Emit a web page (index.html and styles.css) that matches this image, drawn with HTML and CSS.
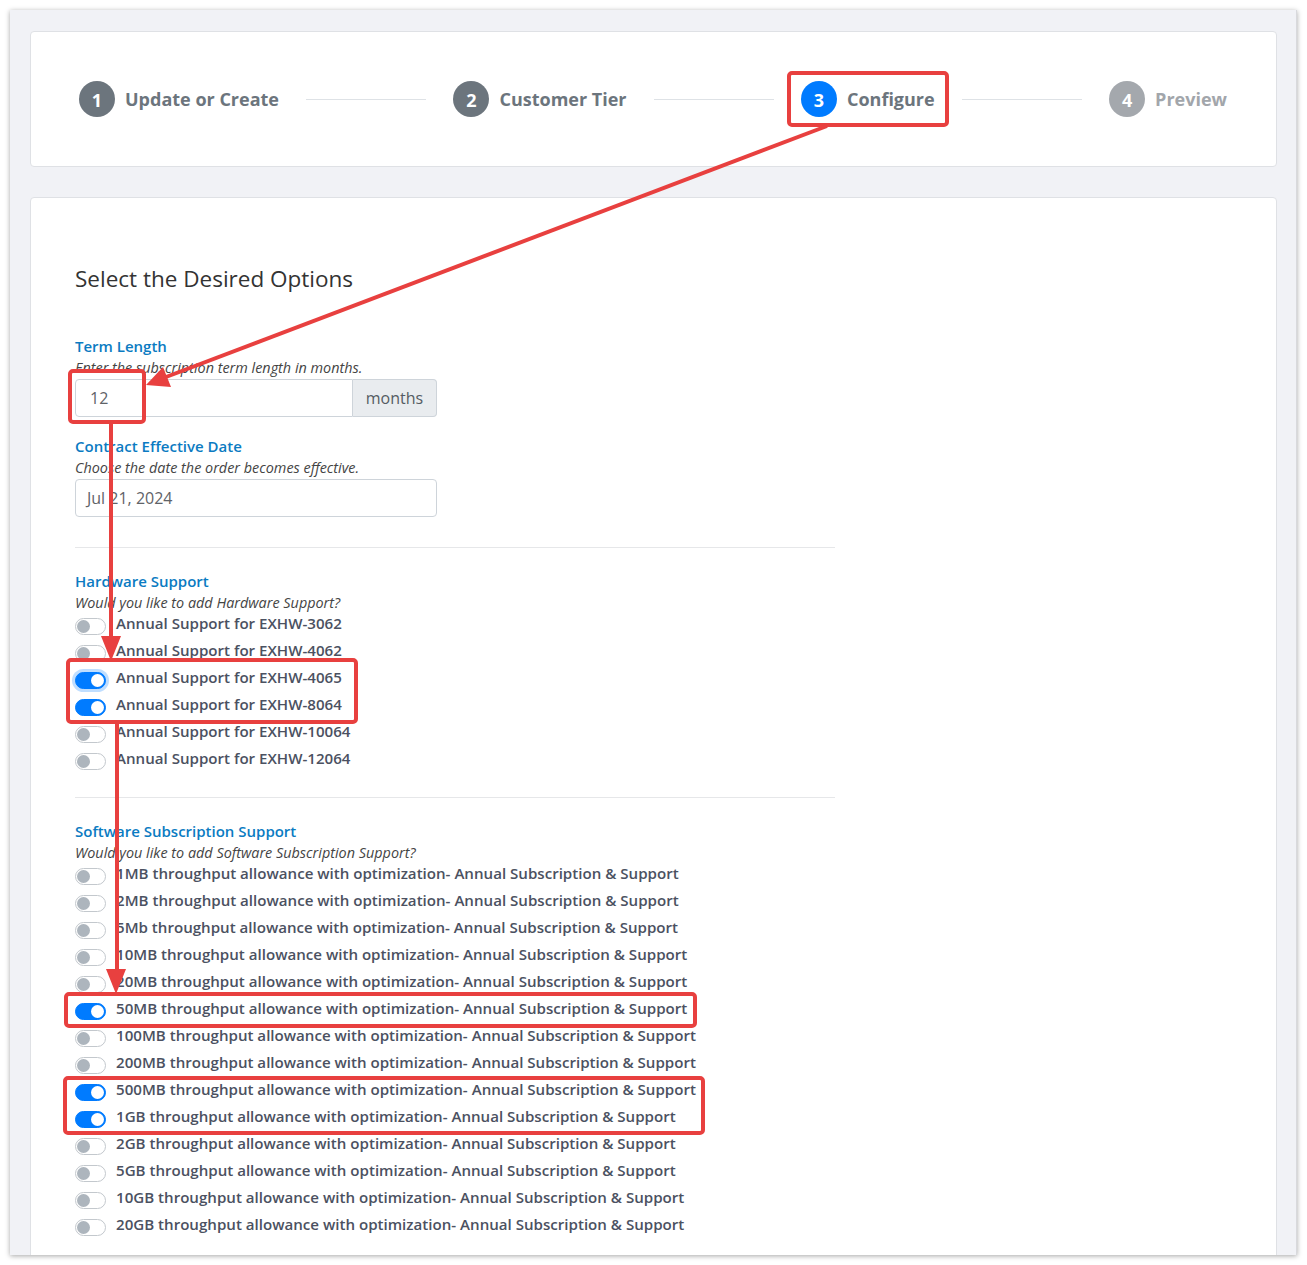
FILE: index.html
```html
<!DOCTYPE html>
<html>
<head>
<meta charset="utf-8">
<link rel="stylesheet" href="styles.css">
</head>
<body>
<div class="window">
  <div class="card steps-card">
    <div class="stepper">
      <div class="step"><span class="num">1</span><span class="step-label">Update or Create</span></div>
      <div class="connector"></div>
      <div class="step"><span class="num">2</span><span class="step-label">Customer Tier</span></div>
      <div class="connector"></div>
      <div class="step active"><span class="num">3</span><span class="step-label">Configure</span></div>
      <div class="connector"></div>
      <div class="step future"><span class="num">4</span><span class="step-label">Preview</span></div>
    </div>
  </div>

  <div class="card form-card">
    <h2 class="title">Select the Desired Options</h2>

    <div class="group term">
      <div class="label">Term Length</div>
      <div class="desc">Enter the subscription term length in months.</div>
      <div class="input-group">
        <div class="input grow">12</div>
        <div class="addon">months</div>
      </div>
    </div>

    <div class="group">
      <div class="label">Contract Effective Date</div>
      <div class="desc">Choose the date the order becomes effective.</div>
      <div class="input date">Jul 21, 2024</div>
    </div>

    <hr class="divider first">

    <div class="section">
      <div class="label">Hardware Support</div>
      <div class="desc">Would you like to add Hardware Support?</div>
      <div class="opt"><span class="switch"></span><span class="opt-label">Annual Support for EXHW-3062</span></div>
      <div class="opt"><span class="switch"></span><span class="opt-label">Annual Support for EXHW-4062</span></div>
      <div class="opt"><span class="switch on focus"></span><span class="opt-label">Annual Support for EXHW-4065</span></div>
      <div class="opt"><span class="switch on"></span><span class="opt-label">Annual Support for EXHW-8064</span></div>
      <div class="opt"><span class="switch"></span><span class="opt-label">Annual Support for EXHW-10064</span></div>
      <div class="opt"><span class="switch"></span><span class="opt-label">Annual Support for EXHW-12064</span></div>
    </div>

    <hr class="divider">

    <div class="section">
      <div class="label">Software Subscription Support</div>
      <div class="desc">Would you like to add Software Subscription Support?</div>
      <div class="opt"><span class="switch"></span><span class="opt-label">1MB throughput allowance with optimization- Annual Subscription &amp; Support</span></div>
      <div class="opt"><span class="switch"></span><span class="opt-label">2MB throughput allowance with optimization- Annual Subscription &amp; Support</span></div>
      <div class="opt"><span class="switch"></span><span class="opt-label">5Mb throughput allowance with optimization- Annual Subscription &amp; Support</span></div>
      <div class="opt"><span class="switch"></span><span class="opt-label">10MB throughput allowance with optimization- Annual Subscription &amp; Support</span></div>
      <div class="opt"><span class="switch"></span><span class="opt-label">20MB throughput allowance with optimization- Annual Subscription &amp; Support</span></div>
      <div class="opt"><span class="switch on"></span><span class="opt-label">50MB throughput allowance with optimization- Annual Subscription &amp; Support</span></div>
      <div class="opt"><span class="switch"></span><span class="opt-label">100MB throughput allowance with optimization- Annual Subscription &amp; Support</span></div>
      <div class="opt"><span class="switch"></span><span class="opt-label">200MB throughput allowance with optimization- Annual Subscription &amp; Support</span></div>
      <div class="opt"><span class="switch on"></span><span class="opt-label">500MB throughput allowance with optimization- Annual Subscription &amp; Support</span></div>
      <div class="opt"><span class="switch on"></span><span class="opt-label">1GB throughput allowance with optimization- Annual Subscription &amp; Support</span></div>
      <div class="opt"><span class="switch"></span><span class="opt-label">2GB throughput allowance with optimization- Annual Subscription &amp; Support</span></div>
      <div class="opt"><span class="switch"></span><span class="opt-label">5GB throughput allowance with optimization- Annual Subscription &amp; Support</span></div>
      <div class="opt"><span class="switch"></span><span class="opt-label">10GB throughput allowance with optimization- Annual Subscription &amp; Support</span></div>
      <div class="opt"><span class="switch"></span><span class="opt-label">20GB throughput allowance with optimization- Annual Subscription &amp; Support</span></div>
    </div>
  </div>
</div>

<svg class="annotations" width="1307" height="1265" viewBox="0 0 1307 1265">
  <g fill="none" stroke="#e8403f" stroke-width="4">
    <rect x="789" y="73" width="158" height="52" rx="3"/>
    <rect x="70" y="371" width="74" height="51" rx="3"/>
    <rect x="68" y="660" width="288" height="62" rx="3"/>
    <rect x="66" y="994" width="629" height="32" rx="3"/>
    <rect x="65" y="1078" width="638" height="55" rx="3"/>
    <line x1="827" y1="126" x2="166" y2="377"/>
    <line x1="111" y1="424" x2="111" y2="640"/>
    <line x1="117" y1="724" x2="117" y2="972"/>
  </g>
  <g fill="#e8403f">
    <polygon points="146,385 163,367 171,387"/>
    <polygon points="111,661 101,636 121,636"/>
    <polygon points="116,994 106,969 126,969"/>
  </g>
</svg>
</body>
</html>
```

FILE: styles.css
```css
* { box-sizing: border-box; }

body {
  margin: 0;
  background: #ffffff;
  font-family: "Open Sans", "DejaVu Sans", sans-serif;
  position: relative;
  width: 1307px;
  height: 1265px;
  overflow: hidden;
}

.window {
  margin: 10px;
  width: 1287px;
  height: 1245px;
  background: #f1f2f6;
  padding: 21px 20px 0 20px;
  overflow: hidden;
  box-shadow: 0 1px 5px rgba(0, 0, 0, 0.35), inset -1px 0 0 #d8d9dd;
}

.card {
  background: #ffffff;
  border: 1px solid #dfe1e5;
  border-radius: 4px;
}

.steps-card {
  height: 136px;
  margin-bottom: 30px;
  display: flex;
  align-items: center;
  padding: 0 49px 0 48px;
}

.stepper {
  display: flex;
  align-items: center;
  width: 100%;
}

.step {
  display: flex;
  align-items: center;
  gap: 10px;
}

.num {
  width: 36px;
  height: 36px;
  border-radius: 50%;
  background: #6c757d;
  color: #ffffff;
  font-weight: 700;
  font-size: 18px;
  display: flex;
  align-items: center;
  justify-content: center;
  padding-top: 1px;
}

.step-label {
  font-size: 18px;
  font-weight: 700;
  color: #6c757d;
  white-space: nowrap;
}

.step.active .num { background: #007bff; }
.step.future .num { background: #a4a8ad; }
.step.future .step-label { color: #a2a6ab; }

.connector {
  flex: 1;
  height: 1px;
  background: #dee2e6;
  margin: 0 27px;
}

.form-card {
  height: 1200px;
  padding: 66px 44px 0 44px;
}

.title {
  margin: 0;
  font-size: 22.5px;
  font-weight: 400;
  line-height: 30px;
  color: #333333;
}

.label {
  font-size: 15px;
  font-weight: 600;
  color: #0b7bc2;
  line-height: 21px;
}

.desc {
  font-size: 14.4px;
  font-style: italic;
  color: #444444;
  line-height: 21px;
}

.group {
  width: 362px;
  margin-bottom: 19px;
}

.group .desc { margin-bottom: 1px; }

.term { margin-top: 42px; }

.input-group {
  display: flex;
  height: 38px;
}

.input {
  height: 38px;
  border: 1px solid #ced4da;
  border-radius: 4px;
  font-size: 16px;
  color: #5f6368;
  padding: 0 11px;
  display: flex;
  align-items: center;
  background: #ffffff;
}

.input.grow {
  flex: 1;
  padding-left: 14px;
  border-radius: 4px 0 0 4px;
}

.addon {
  width: 84px;
  background: #e9ecef;
  border: 1px solid #ced4da;
  border-left: none;
  border-radius: 0 4px 4px 0;
  font-size: 16px;
  color: #555c63;
  display: flex;
  align-items: center;
  justify-content: center;
}

.divider {
  border: none;
  height: 1px;
  background: #e6e7e9;
  width: 760px;
  margin: 0;
}

.divider.first { margin-top: 30px; }

.section {
  padding-top: 23px;
  padding-bottom: 22px;
}

.opt {
  display: flex;
  align-items: flex-start;
  height: 27px;
}

.opt-label {
  font-size: 15.1px;
  font-weight: 600;
  color: #4b5161;
  line-height: 21px;
  white-space: nowrap;
}

.switch {
  flex: none;
  position: relative;
  width: 31px;
  height: 17px;
  margin-top: 5px;
  margin-right: 10px;
  border: 1px solid #c3c8cd;
  border-radius: 9px;
  background: #ffffff;
}

.switch::after {
  content: "";
  position: absolute;
  top: 1px;
  left: 1px;
  width: 13px;
  height: 13px;
  border-radius: 50%;
  background: #adb5bd;
}

.switch.on {
  background: #007bff;
  border-color: #007bff;
}

.switch.on::after {
  left: 15px;
  background: #ffffff;
}

.switch.focus {
  box-shadow: 0 0 0 3px rgba(0, 123, 255, 0.25);
}

.annotations {
  position: absolute;
  top: 0;
  left: 0;
  pointer-events: none;
}
```
